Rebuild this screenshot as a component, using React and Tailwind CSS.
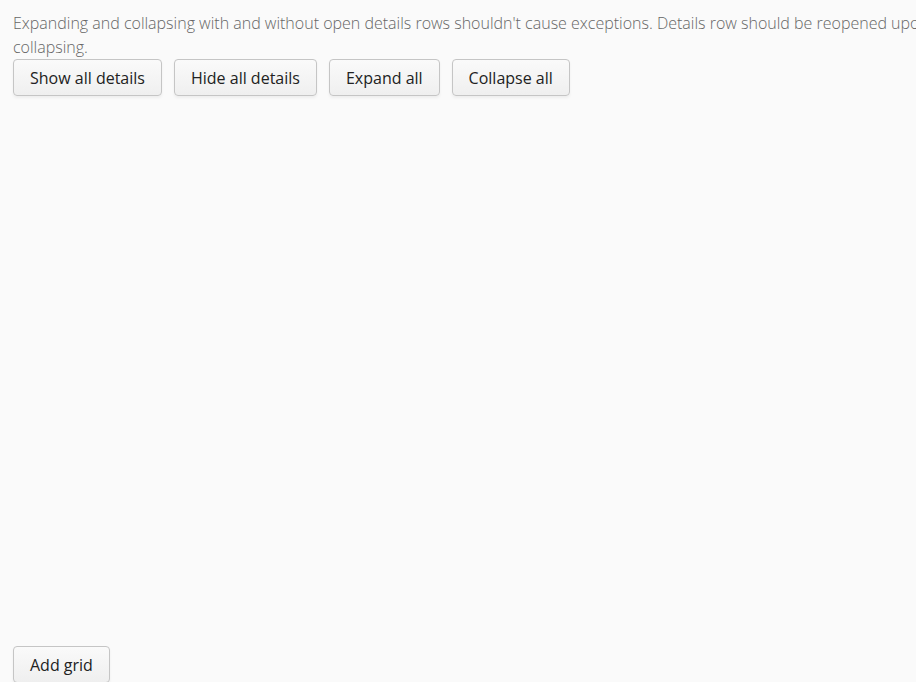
export default function App() {
  const buttons = ['Show all details', 'Hide all details', 'Expand all', 'Collapse all'];

  const btn =
    'h-[37px] px-4 rounded-[4px] border border-[#c5c5c5] bg-gradient-to-b from-[#fafafa] to-[#efefef] text-[16px] text-[#222] shadow-[0_2px_3px_rgba(0,0,0,0.05)] whitespace-nowrap';

  return (
    <div className="min-h-[682px] w-full overflow-hidden bg-[#fafafa] font-['Open_Sans',sans-serif]">
      <div className="w-[960px] pl-[13px] pt-[11px]">
        <p className="text-[16px] leading-6 font-light text-[#666]">
          Expanding and collapsing with and without open details rows shouldn't cause exceptions. Details row should be reopened upon collapsing.
        </p>
        <div className="flex gap-3">
          {buttons.map(b => (
            <button key={b} className={btn}>{b}</button>
          ))}
        </div>
        <div className="h-[550px]" />
        <button className={btn}>Add grid</button>
      </div>
    </div>
  );
}
